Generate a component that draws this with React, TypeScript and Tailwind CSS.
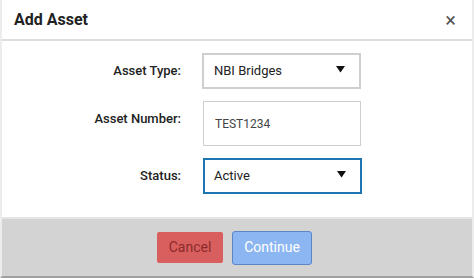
function Caret() {
  return (
    <svg width="9" height="7" viewBox="0 0 9 7" className="mb-[3px] shrink-0">
      <path d="M0 0 L9 0 L4.5 6.5 Z" fill="#111" />
    </svg>
  );
}

export default function App() {
  return (
    <div
      className="flex h-[278px] w-[474px] flex-col overflow-hidden border-x-2 border-b-2 border-x-[#ececec] border-b-[#a0a0a0] bg-white"
      style={{ fontFamily: "Roboto, 'Liberation Sans', sans-serif" }}
    >
      {/* HEADER */}
      <div className="flex h-[41px] shrink-0 items-center justify-between border-b-2 border-[#dedede] pl-3 pr-4">
        <h1 className="text-[16px] font-bold text-[#222]">Add Asset</h1>
        <span className="text-[20px] leading-none text-[#555]">×</span>
      </div>

      {/* BODY */}
      <div className="flex flex-1 flex-col gap-[12px] pt-[12px]">
        <div className="flex items-center">
          <label className="w-[179px] text-right text-[13px] font-medium text-[#222]">
            Asset Type:
          </label>
          <div className="ml-[21px] flex h-[36px] w-[159px] items-center justify-between border-2 border-[#cfcfcf] pl-[10px] pr-[14px] text-[13px] text-[#222]">
            NBI Bridges
            <Caret />
          </div>
        </div>

        <div className="flex items-start">
          <label className="mt-[8px] w-[179px] text-right text-[13px] font-medium text-[#222]">
            Asset Number:
          </label>
          <div className="ml-[22px] flex h-[45px] w-[158px] items-center border border-[#cfcfcf] pl-[11px] text-[12px] text-[#444]">
            TEST1234
          </div>
        </div>

        <div className="flex items-center">
          <label className="w-[179px] text-right text-[13px] font-medium text-[#222]">
            Status:
          </label>
          <div className="ml-[22px] flex h-[36px] w-[159px] items-center justify-between border-2 border-[#1f74b4] pl-[9px] pr-[14px] text-[13px] text-[#222]">
            Active
            <Caret />
          </div>
        </div>
      </div>

      {/* FOOTER */}
      <div className="flex h-[59px] shrink-0 items-center justify-center gap-[9px] border-t-2 border-[#e4e4e4] bg-[#d3d3d3] pr-[5px]">
        <button className="h-[31px] w-[66px] rounded-[2px] bg-[#d95f5f] text-[14px] text-[#8b2b2b]">
          Cancel
        </button>
        <button className="h-[34px] w-[80px] rounded-[3px] border border-[#5b84c4] bg-[#8cb6f2] text-[14px] text-white">
          Continue
        </button>
      </div>
    </div>
  );
}
